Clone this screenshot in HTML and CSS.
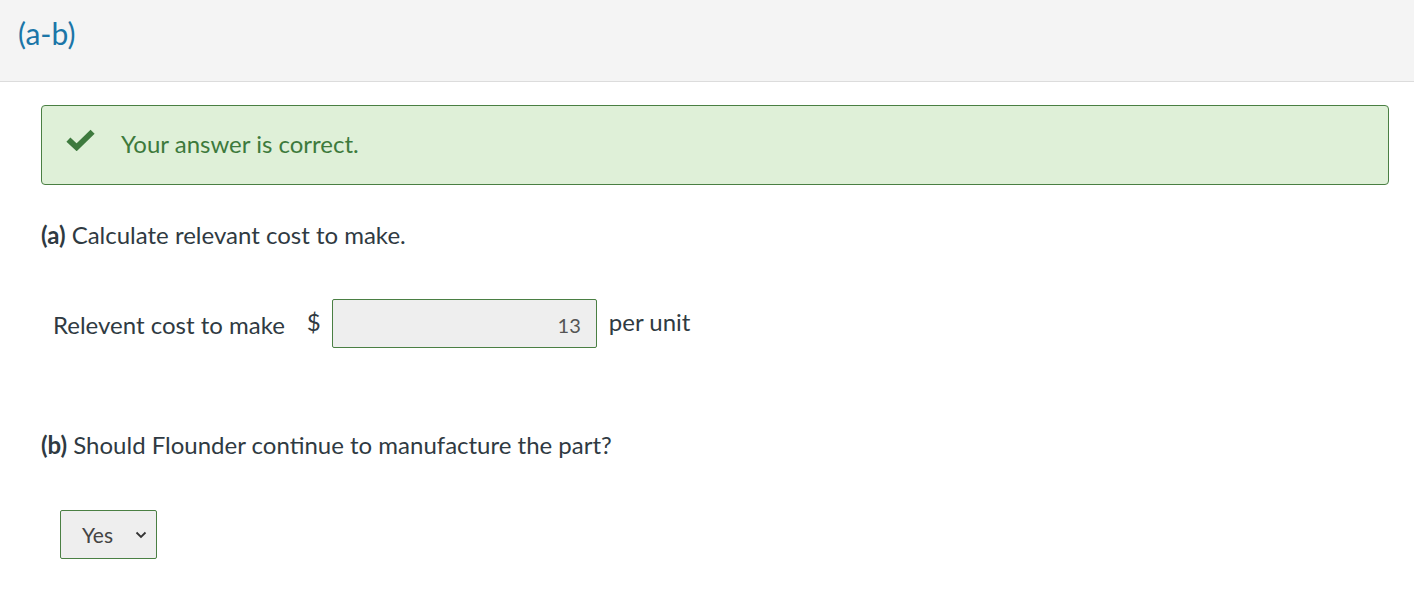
FILE: index.html
```html
<!DOCTYPE html>
<html>
<head>
<meta charset="utf-8">
<link rel="stylesheet" href="styles.css">
</head>
<body>
<header class="head"><span class="head-title">(a-b)</span></header>
<main class="content">
  <div class="alert">
    <svg class="check" viewBox="0 0 30 22" width="29" height="22"><path d="M2.5 10.5 L11 18.5 L27.5 2.5" fill="none" stroke="#3e7a3e" stroke-width="6" stroke-linejoin="miter" stroke-linecap="butt"/></svg>
    <span class="alert-text">Your answer is correct.</span>
  </div>
  <p class="question"><b>(a)</b> Calculate relevant cost to make.</p>
  <div class="row">
    <span class="label">Relevent cost to make</span>
    <span class="dollar">$</span>
    <div class="field">13</div>
    <span class="unit">per unit</span>
  </div>
  <p class="question q-b"><b>(b)</b> Should Flounder continue to manufacture the part?</p>
  <div class="select">
    <span class="sel-text">Yes</span>
    <svg class="chev" viewBox="0 0 12 8" width="12" height="8"><path d="M1.5 1.5 L6 6 L10.5 1.5" fill="none" stroke="#333" stroke-width="1.8"/></svg>
  </div>
</main>
</body>
</html>
```
FILE: styles.css
```css
* { box-sizing: border-box; }
body {
  margin: 0;
  font-family: Lato, "Open Sans", sans-serif;
  color: #2f3a42;
  background: #fff;
}
.head {
  height: 82px;
  background: #f4f4f4;
  border-bottom: 1px solid #dcdcdc;
  padding: 15px 0 0 18px;
}
.head-title {
  font-size: 30px;
  color: #1b76a8;
}
.content {
  padding: 23px 25px 0 41px;
}
.alert {
  height: 80px;
  background: #dff0d8;
  border: 1px solid #4a7f43;
  border-radius: 4px;
  display: flex;
  align-items: center;
  padding-left: 24px;
}
.check { margin-top: -10px; }
.alert-text {
  margin-left: 26px;
  font-size: 24px;
  color: #3d7a3c;
  margin-top: -4px;
}
.question {
  margin: 36px 0 0;
  font-size: 24px;
  line-height: 28px;
}
.question b { font-weight: 700; }
.row {
  display: flex;
  align-items: center;
  margin-top: 50px;
  padding-left: 12px;
  height: 49px;
}
.label { font-size: 24px; margin-top: 2px; }
.dollar { font-size: 24px; margin-left: 22px; margin-top: -4px; }
.field {
  width: 265px;
  height: 49px;
  margin-left: 11px;
  background: #eeeeee;
  border: 1px solid #4a7f43;
  border-radius: 2px;
  display: flex;
  align-items: center;
  justify-content: flex-end;
  padding: 2px 15px 0 0;
  font-size: 20px;
  color: #555;
}
.unit { font-size: 24px; margin-left: 12px; margin-top: -4px; }
.q-b { margin-top: 83px; }
.select {
  margin: 51px 0 0 19px;
  width: 97px;
  height: 49px;
  background: #eeeeee;
  border: 1px solid #4a7f43;
  border-radius: 2px;
  display: flex;
  align-items: center;
  padding-left: 21px;
}
.sel-text { font-size: 21px; color: #444; }
.chev { margin-left: 22px; }
```
